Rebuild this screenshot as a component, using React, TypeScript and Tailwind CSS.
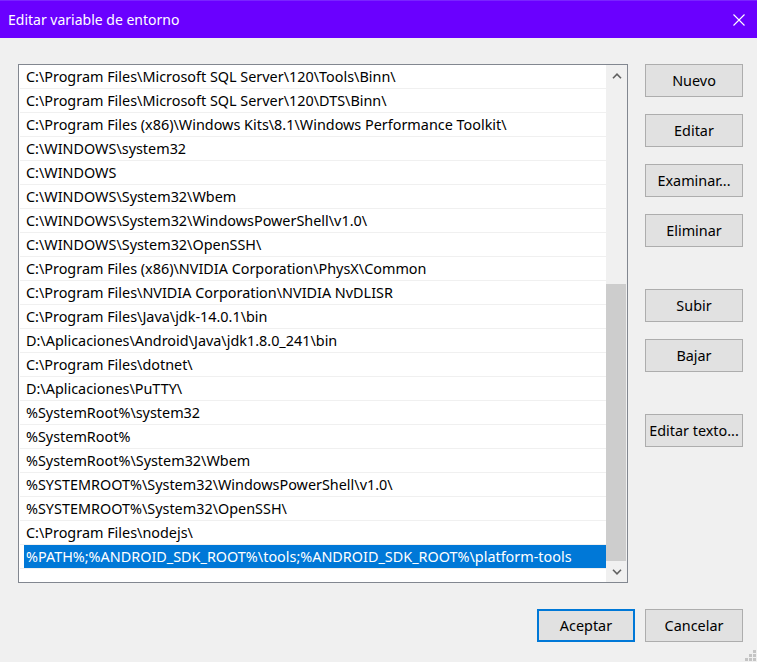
import React from "react"

const paths = [
  "C:\\Program Files\\Microsoft SQL Server\\120\\Tools\\Binn\\",
  "C:\\Program Files\\Microsoft SQL Server\\120\\DTS\\Binn\\",
  "C:\\Program Files (x86)\\Windows Kits\\8.1\\Windows Performance Toolkit\\",
  "C:\\WINDOWS\\system32",
  "C:\\WINDOWS",
  "C:\\WINDOWS\\System32\\Wbem",
  "C:\\WINDOWS\\System32\\WindowsPowerShell\\v1.0\\",
  "C:\\WINDOWS\\System32\\OpenSSH\\",
  "C:\\Program Files (x86)\\NVIDIA Corporation\\PhysX\\Common",
  "C:\\Program Files\\NVIDIA Corporation\\NVIDIA NvDLISR",
  "C:\\Program Files\\Java\\jdk-14.0.1\\bin",
  "D:\\Aplicaciones\\Android\\Java\\jdk1.8.0_241\\bin",
  "C:\\Program Files\\dotnet\\",
  "D:\\Aplicaciones\\PuTTY\\",
  "%SystemRoot%\\system32",
  "%SystemRoot%",
  "%SystemRoot%\\System32\\Wbem",
  "%SYSTEMROOT%\\System32\\WindowsPowerShell\\v1.0\\",
  "%SYSTEMROOT%\\System32\\OpenSSH\\",
  "C:\\Program Files\\nodejs\\",
  "%PATH%;%ANDROID_SDK_ROOT%\\tools;%ANDROID_SDK_ROOT%\\platform-tools",
]

const selected = paths.length - 1

function Btn({ label, primary, className }: { label: string; primary?: boolean; className?: string }) {
  return (
    <button
      className={
        "flex h-[33px] w-[98px] items-center justify-center bg-[#e1e1e1] text-[14.4px] text-black " +
        (primary ? "border-2 border-[#0078d7] " : "border border-[#adadad] ") +
        (className ?? "")
      }
    >
      {label}
    </button>
  )
}

function Chevron({ up }: { up?: boolean }) {
  return (
    <svg width="10" height="6" viewBox="0 0 10 6" className="text-[#606060]">
      <path
        d={up ? "M1 5.2 L5 1.2 L9 5.2" : "M1 0.8 L5 4.8 L9 0.8"}
        fill="none"
        stroke="currentColor"
        strokeWidth="1.6"
      />
    </svg>
  )
}

export default function App() {
  return (
    <div
      className="flex h-[662px] w-[757px] flex-col overflow-hidden bg-[#f0f0f0]"
      style={{ fontFamily: '"Noto Sans", "Open Sans", sans-serif' }}
    >
      {/* title bar */}
      <div className="flex h-[38px] items-center justify-between border-t border-[#7a24ff] bg-[#6a00ff] pl-[8px] pr-[12px] text-white">
        <span className="text-[14px]">Editar variable de entorno</span>
        <svg width="12" height="12" viewBox="0 0 12 12">
          <path d="M0.5 0.5 L11.5 11.5 M11.5 0.5 L0.5 11.5" stroke="white" strokeWidth="1.1" />
        </svg>
      </div>

      <div className="relative flex flex-1 flex-col">
        <div className="flex pl-[18px] pt-[26px]">
          {/* list */}
          <div className="flex h-[519px] w-[610px] border border-[#828790] bg-white">
            <div className="flex-1 pl-[1px]">
              {paths.map((p, i) => (
                <div key={i} className="h-[24px] border-b border-[#f0f0f0]">
                  <div
                    className={
                      "ml-[4px] flex h-[23px] items-center whitespace-nowrap pl-[2px] pt-[1px] text-[14.4px] " +
                      (i === selected ? "bg-[#0078d7] text-white" : "text-black")
                    }
                  >
                    {p}
                  </div>
                </div>
              ))}
            </div>
            {/* scrollbar */}
            <div className="flex w-[21px] flex-col bg-[#f0f0f0]">
              <div className="flex h-[21px] items-center justify-center">
                <Chevron up />
              </div>
              <div className="flex flex-1 flex-col justify-end">
                <div className="mr-[1px] h-[277px] bg-[#cdcdcd]" />
              </div>
              <div className="flex h-[21px] items-center justify-center">
                <Chevron />
              </div>
            </div>
          </div>

          {/* side buttons */}
          <div className="ml-[17px] flex flex-col">
            <Btn label="Nuevo" />
            <Btn label="Editar" className="mt-[17px]" />
            <Btn label="Examinar..." className="mt-[17px]" />
            <Btn label="Eliminar" className="mt-[17px]" />
            <Btn label="Subir" className="mt-[42px]" />
            <Btn label="Bajar" className="mt-[17px]" />
            <Btn label="Editar texto..." className="mt-[42px]" />
          </div>
        </div>

        {/* bottom buttons */}
        <div className="mt-[26px] flex justify-end gap-[10px] pr-[14px]">
          <Btn label="Aceptar" primary />
          <Btn label="Cancelar" />
        </div>

        {/* resize grip */}
        <svg width="12" height="12" viewBox="0 0 12 12" className="absolute bottom-0 right-0">
          <g fill="#c4c4c4">
            <rect x="8" y="0" width="3" height="3" />
            <rect x="4" y="4" width="3" height="3" />
            <rect x="8" y="4" width="3" height="3" />
            <rect x="0" y="8" width="3" height="3" />
            <rect x="4" y="8" width="3" height="3" />
            <rect x="8" y="8" width="3" height="3" />
          </g>
        </svg>
      </div>
    </div>
  )
}
